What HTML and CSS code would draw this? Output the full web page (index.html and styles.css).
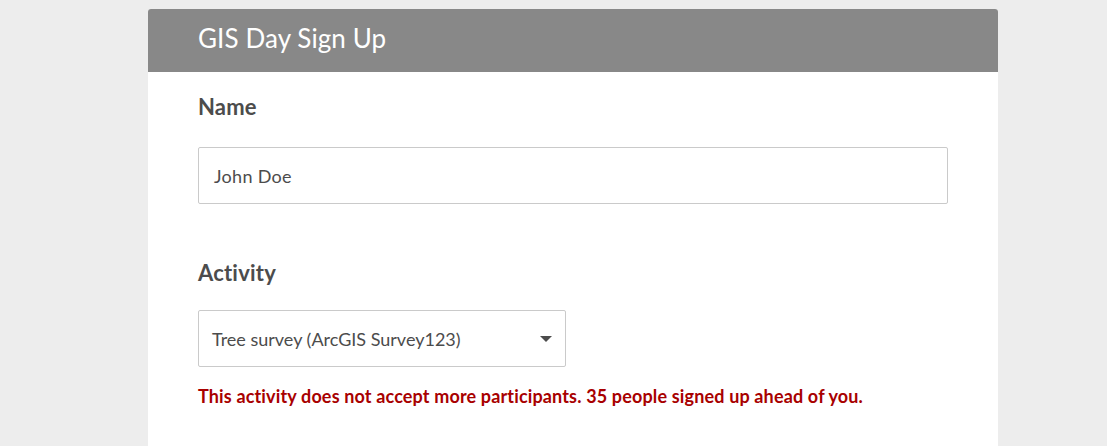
FILE: index.html
```html
<!DOCTYPE html>
<html>
<head>
<meta charset="utf-8">
<link rel="stylesheet" href="styles.css">
</head>
<body>
<div class="card">
  <div class="card-header">GIS Day Sign Up</div>
  <div class="card-body">
    <div class="field">
      <label class="label">Name</label>
      <div class="input">John Doe</div>
    </div>
    <div class="field">
      <label class="label">Activity</label>
      <div class="select">
        <span>Tree survey (ArcGIS Survey123)</span>
        <span class="caret"></span>
      </div>
      <div class="error">This activity does not accept more participants. 35 people signed up ahead of you.</div>
    </div>
  </div>
</div>
</body>
</html>
```
FILE: styles.css
```css
html, body {
  margin: 0;
  padding: 0;
  background: #ededed;
  font-family: Lato, "Open Sans", sans-serif;
}
body {
  padding-top: 9px;
}
.card {
  width: 850px;
  margin-left: 148px;
  background: #fff;
  border-radius: 3px 3px 0 0;
  height: 437px;
}
.card-header {
  background: #888888;
  color: #fff;
  height: 63px;
  box-sizing: border-box;
  padding: 13px 50px 0;
  font-size: 26px;
  line-height: 33px;
  letter-spacing: 0.1px;
  border-radius: 3px 3px 0 0;
}
.card-body {
  padding: 20px 50px 0;
}
.field {
  display: flex;
  flex-direction: column;
}
.field + .field {
  margin-top: 54px;
}
.label {
  font-weight: bold;
  font-size: 22px;
  line-height: 30px;
  letter-spacing: 0.2px;
  color: #4c4c4c;
}
.input {
  margin-top: 25px;
  height: 57px;
  box-sizing: border-box;
  border: 1px solid #cacaca;
  border-radius: 2px;
  padding: 0 15px;
  display: flex;
  align-items: center;
  font-size: 18px;
  letter-spacing: 0.3px;
  color: #4c4c4c;
}
.select {
  margin-top: 22px;
  width: 368px;
  height: 57px;
  box-sizing: border-box;
  border: 1px solid #cacaca;
  border-radius: 2px;
  padding: 0 13px 0 13px;
  display: flex;
  align-items: center;
  justify-content: space-between;
  font-size: 18px;
  color: #4c4c4c;
}
.caret {
  width: 0;
  height: 0;
  border-left: 6px solid transparent;
  border-right: 6px solid transparent;
  border-top: 6px solid #4c4c4c;
}
.error {
  margin-top: 17px;
  color: #a80000;
  font-weight: bold;
  font-size: 18px;
  line-height: 24px;
  letter-spacing: 0.15px;
}
```
